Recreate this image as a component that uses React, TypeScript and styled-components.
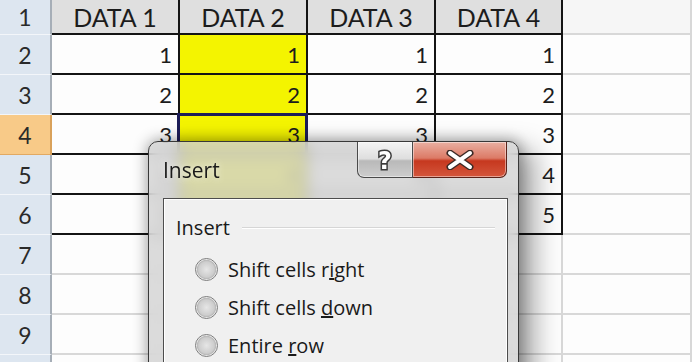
import { Fragment } from 'react'
import styled, { createGlobalStyle } from 'styled-components'

const GlobalStyle = createGlobalStyle`
  html, body {
    margin: 0;
    padding: 0;
  }
  body {
    width: 692px;
    height: 362px;
    overflow: hidden;
    background: #ffffff;
  }
`

const Sheet = styled.div`
  position: relative;
  width: 692px;
  height: 362px;
  overflow: hidden;
  font-family: Lato, 'Liberation Sans', sans-serif;
  background: #fdfdfd;
`

const Grid = styled.div`
  display: grid;
  grid-template-columns: 52px 128px 128px 128px 127px 1fr;
  grid-template-rows: 35px;
  grid-auto-rows: 40px;
`

const RowHead = styled.div<{ $active?: boolean }>`
  box-sizing: border-box;
  display: flex;
  align-items: center;
  justify-content: center;
  font-size: 23px;
  color: #2a2a2a;
  background: ${(p) => (p.$active ? '#f8ca88' : '#dde6f0')};
  border-right: 2px solid ${(p) => (p.$active ? '#d9a15a' : '#a6aeb7')};
  border-bottom: 1px solid ${(p) => (p.$active ? '#e2a962' : '#f3f6fa')};
`

const Cell = styled.div<{ $boxed?: boolean; $header?: boolean; $fill?: string; $selected?: boolean }>`
  position: relative;
  box-sizing: border-box;
  display: flex;
  align-items: center;
  justify-content: ${(p) => (p.$header ? 'center' : 'flex-end')};
  padding-right: ${(p) => (p.$header ? '0' : '6px')};
  font-size: ${(p) => (p.$header ? '25px' : '22px')};
  color: #1c1c1c;
  background: ${(p) => p.$fill ?? '#fdfdfd'};
  border-right: 2px solid ${(p) => (p.$boxed ? '#141414' : '#d8d8d8')};
  border-bottom: 2px solid ${(p) => (p.$boxed ? '#141414' : '#d8d8d8')};

  ${(p) =>
    p.$selected &&
    `
    &::after {
      content: '';
      position: absolute;
      top: -2px;
      left: -3px;
      right: -2px;
      bottom: -2px;
      border: 3px solid #1d1d58;
    }
  `}
`

const Dialog = styled.div`
  position: absolute;
  left: 148px;
  top: 141px;
  width: 371px;
  height: 260px;
  box-sizing: border-box;
  display: flex;
  flex-direction: column;
  padding: 0 10px 0 14px;
  border: 1px solid #383838;
  border-radius: 10px 10px 0 0;
  background: rgba(210, 210, 210, 0.8);
  backdrop-filter: blur(7px);
  box-shadow: 0 0 14px 2px rgba(0, 0, 0, 0.3), 16px 8px 26px rgba(0, 0, 0, 0.34);
  font-family: 'Open Sans', 'Noto Sans', sans-serif;
  color: #1a1a1a;
`

const TitleBar = styled.div`
  height: 56px;
  display: flex;
  align-items: center;
`

const Title = styled.div`
  font-size: 21px;
  text-shadow: 0 0 6px rgba(255, 255, 255, 0.8);
`

const Buttons = styled.div`
  align-self: flex-start;
  margin-left: auto;
  margin-right: 1px;
  display: flex;
  height: 36px;
`

const CaptionButton = styled.div<{ $close?: boolean }>`
  box-sizing: border-box;
  width: ${(p) => (p.$close ? '94px' : '56px')};
  height: 36px;
  display: flex;
  align-items: center;
  justify-content: center;
  border: 1px solid ${(p) => (p.$close ? '#5b2219' : '#4a4a4a')};
  border-top: none;
  border-left-width: ${(p) => (p.$close ? '0' : '1px')};
  border-radius: ${(p) => (p.$close ? '0 0 7px 0' : '0 0 0 7px')};
  background: ${(p) =>
    p.$close
      ? 'linear-gradient(#eab0a2, #dc7a66 46%, #c6381f 54%, #d4563c)'
      : 'linear-gradient(#f4f4f4, #dedede 48%, #b9b9b9 54%, #cdcdcd)'};
  box-shadow: inset 0 0 0 1px rgba(255, 255, 255, 0.45);
`

const Client = styled.div`
  flex: 1;
  box-sizing: border-box;
  border: 1px solid #4d4d4d;
  background: #f0f0f0;
  padding: 14px 12px 0 12px;
  box-shadow: inset 0 0 0 1px #ffffff;
`

const GroupHeader = styled.div`
  display: flex;
  align-items: center;
  gap: 12px;
  height: 28px;
  font-size: 20px;
`

const GroupRule = styled.div`
  flex: 1;
  height: 1px;
  margin-top: 2px;
  background: #d6d6d6;
  border-bottom: 1px solid #ffffff;
`

const Options = styled.div`
  display: flex;
  flex-direction: column;
  margin-top: 9px;
  padding-left: 19px;
`

const Option = styled.label`
  display: flex;
  align-items: center;
  gap: 10px;
  height: 38px;
  font-size: 20px;
`

const Radio = styled.span`
  box-sizing: border-box;
  width: 23px;
  height: 23px;
  border-radius: 50%;
  border: 1px solid #7c7c7c;
  background: radial-gradient(
    circle at 50% 50%,
    #e6e6e6 0%,
    #cdcdcd 52%,
    #b9b9b9 62%,
    #fbfbfb 70%,
    #e4e4e4 100%
  );
`

const Glyph = styled.svg`
  display: block;
`

const rows = [
  ['1', '1', '1', '1'],
  ['2', '2', '2', '2'],
  ['3', '3', '3', '3'],
  ['4', '4', '4', '4'],
  ['5', '5', '5', '5'],
]

export default function App() {
  return (
    <>
      <GlobalStyle />
      <Sheet>
        <Grid>
          <RowHead>1</RowHead>
          {['DATA 1', 'DATA 2', 'DATA 3', 'DATA 4'].map((h) => (
            <Cell key={h} $boxed $header $fill="#dfdfdf">
              {h}
            </Cell>
          ))}
          <Cell $fill="#f6f6f6" />

          {rows.map((r, i) => (
            <Fragment key={'r' + i}>
              <RowHead $active={i === 2}>{i + 2}</RowHead>
              {r.map((v, c) => (
                <Cell
                  key={c}
                  $boxed
                  $fill={c === 1 ? '#f4f400' : undefined}
                  $selected={c === 1 && i === 2}
                >
                  {v}
                </Cell>
              ))}
              <Cell />
            </Fragment>
          ))}

          {[7, 8, 9, 0].map((n) => (
            <Fragment key={'b' + n}>
              <RowHead>{n > 0 ? n : ''}</RowHead>
              <Cell />
              <Cell />
              <Cell />
              <Cell />
              <Cell />
            </Fragment>
          ))}
        </Grid>

        <Dialog>
          <TitleBar>
            <Title>Insert</Title>
            <Buttons>
              <CaptionButton>
                <Glyph width="22" height="28" viewBox="0 0 22 28">
                  <text
                    x="11"
                    y="23"
                    textAnchor="middle"
                    fontFamily="DejaVu Sans, sans-serif"
                    fontWeight="bold"
                    fontSize="24"
                    fill="#ffffff"
                    stroke="#3a3a3a"
                    strokeWidth="3"
                    paintOrder="stroke"
                  >
                    ?
                  </text>
                </Glyph>
              </CaptionButton>
              <CaptionButton $close>
                <Glyph width="30" height="20" viewBox="0 0 30 20">
                  <path d="M5 3 L25 17 M25 3 L5 17" stroke="#3d2a26" strokeWidth="7" strokeLinecap="round" />
                  <path d="M5 3 L25 17 M25 3 L5 17" stroke="#ffffff" strokeWidth="4" strokeLinecap="round" />
                </Glyph>
              </CaptionButton>
            </Buttons>
          </TitleBar>
          <Client>
            <GroupHeader>
              Insert
              <GroupRule />
            </GroupHeader>
            <Options>
              <Option>
                <Radio />
                <span>
                  Shift cells r<u>i</u>ght
                </span>
              </Option>
              <Option>
                <Radio />
                <span>
                  Shift cells <u>d</u>own
                </span>
              </Option>
              <Option>
                <Radio />
                <span>
                  Entire <u>r</u>ow
                </span>
              </Option>
            </Options>
          </Client>
        </Dialog>
      </Sheet>
    </>
  )
}
